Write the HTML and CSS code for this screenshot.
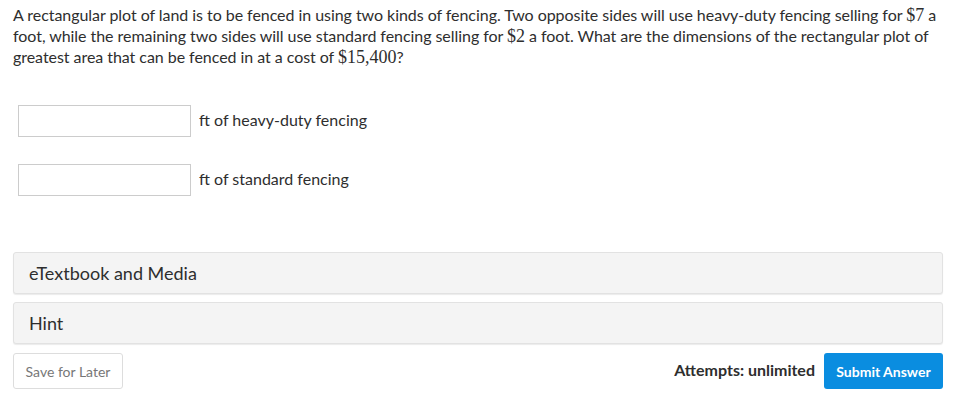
FILE: index.html
```html
<!DOCTYPE html>
<html lang="en">
<head>
    <meta charset="UTF-8">
    <title>Question</title>
    <link rel="stylesheet" href="styles.css">
</head>
<body>
    <div class="question">
        <p class="prompt">
            A rectangular plot of land is to be fenced in using two kinds of fencing. Two opposite sides will use heavy-duty fencing selling for <span class="math">$7</span> a foot, while the remaining two sides will use standard fencing selling for <span class="math">$2</span> a foot. What are the dimensions of the rectangular plot of greatest area that can be fenced in at a cost of <span class="math">$15,400</span>?
        </p>

        <div class="answers">
            <div class="answer-row">
                <input type="text" class="answer-input">
                <span class="unit">ft of heavy-duty fencing</span>
            </div>
            <div class="answer-row">
                <input type="text" class="answer-input">
                <span class="unit">ft of standard fencing</span>
            </div>
        </div>

        <div class="panel">eTextbook and Media</div>
        <div class="panel">Hint</div>

        <div class="footer">
            <button class="btn-save">Save for Later</button>
            <div class="footer-right">
                <span class="attempts">Attempts: unlimited</span>
                <button class="btn-submit">Submit Answer</button>
            </div>
        </div>
    </div>
</body>
</html>
```

FILE: styles.css
```css
body {
    margin: 0;
    font-family: Lato, "Open Sans", sans-serif;
    color: #2e2e2e;
    background-color: #fff;
}

.question {
    padding: 4px 12px 0 13px;
}

.prompt {
    margin: 0;
    font-size: 16px;
    line-height: 21px;
    letter-spacing: -0.05px;
}

.math {
    font-family: "Liberation Serif", "Times New Roman", serif;
    font-size: 18px;
    line-height: 1;
    letter-spacing: 0;
}

.answers {
    display: flex;
    flex-direction: column;
    gap: 27px;
    padding: 38px 0 0 5px;
}

.answer-row {
    display: flex;
    align-items: center;
}

.answer-input {
    width: 173px;
    height: 32px;
    box-sizing: border-box;
    border: 1px solid #ccc;
    margin: 0 8px 0 0;
    padding: 0 6px;
    font-family: inherit;
}

.unit {
    font-size: 16px;
    margin-top: -4px;
}

.panel {
    margin-top: 56px;
    height: 42px;
    box-sizing: border-box;
    background-color: #f4f4f4;
    border: 1px solid #e2e2e2;
    border-radius: 3px;
    box-shadow: 0 1px 1px rgba(0, 0, 0, 0.08);
    padding: 0 15px;
    display: flex;
    align-items: center;
    font-size: 18px;
}

.panel + .panel {
    margin-top: 8px;
}

.footer {
    display: flex;
    justify-content: space-between;
    align-items: center;
    margin-top: 9px;
}

.btn-save {
    height: 36px;
    width: 110px;
    background-color: #fff;
    border: 1px solid #ddd;
    border-radius: 3px;
    color: #777;
    font-family: inherit;
    font-size: 14px;
}

.footer-right {
    display: flex;
    align-items: center;
}

.attempts {
    font-size: 16px;
    font-weight: bold;
    margin-right: 9px;
    margin-top: -4px;
}

.btn-submit {
    height: 36px;
    width: 119px;
    background-color: #0a8de0;
    border: none;
    border-radius: 3px;
    color: #fff;
    font-family: inherit;
    font-size: 14px;
    font-weight: bold;
}
```
